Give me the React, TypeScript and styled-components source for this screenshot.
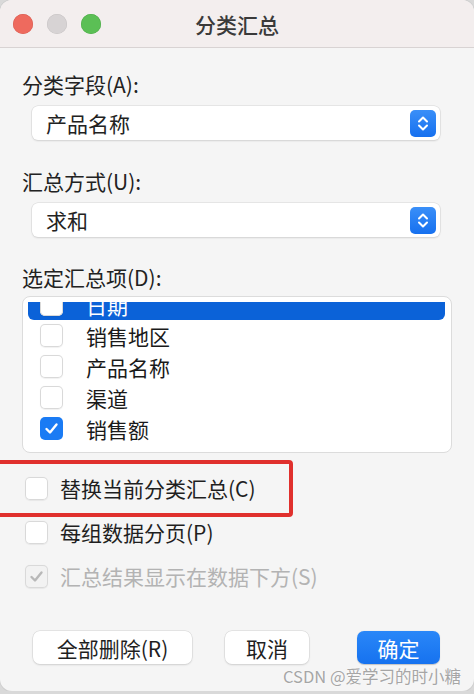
import React from "react";
import styled, { createGlobalStyle } from "styled-components";

const Global = createGlobalStyle`
  html, body { margin: 0; padding: 0; background: #d9d9d9; }
  body { font-family: "Noto Sans CJK SC", "Noto Sans", sans-serif; }
  * { box-sizing: border-box; }
`;

const Window = styled.div`
  width: 474px;
  height: 691px;
  background: #f5f5f5;
  border-radius: 12px;
  overflow: hidden;
  display: flex;
  flex-direction: column;
  box-shadow: 0 0 0 1px #cfcfcf;
`;

const TitleBar = styled.div`
  height: 48px;
  flex: none;
  background: #f3eeee;
  border-bottom: 1px solid #d8d3d3;
  display: grid;
  grid-template-columns: 1fr auto 1fr;
  align-items: center;
  padding: 0 13px;
`;

const Lights = styled.div`
  display: flex;
  gap: 14px;
`;

const Light = styled.span<{ $c: string; $b: string }>`
  width: 20px;
  height: 20px;
  border-radius: 50%;
  background: ${(p) => p.$c};
  box-shadow: inset 0 0 0 0.5px ${(p) => p.$b};
`;

const Title = styled.div`
  font-size: 21px;
  font-weight: 500;
  color: #3a3a3a;
  line-height: 28px;
`;

const Content = styled.div`
  display: flex;
  flex-direction: column;
  padding: 0 22px;
`;

const Label = styled.div<{ $top: number }>`
  font-size: 21px;
  line-height: 28px;
  color: #222;
  margin-top: ${(p) => p.$top}px;
`;

const Select = styled.div<{ $top: number }>`
  margin: ${(p) => p.$top}px 12px 0 10px;
  height: 34px;
  background: #fff;
  border-radius: 6px;
  box-shadow: 0 0 0 0.5px #d6d6d6, 0 1px 2px rgba(0, 0, 0, 0.14);
  display: flex;
  align-items: center;
  justify-content: space-between;
  padding: 0 4px 0 14px;
  font-size: 21px;
  color: #222;
`;

const Stepper = styled.span`
  width: 26px;
  height: 27px;
  border-radius: 5px;
  background: linear-gradient(#3a8ff8, #1670ef);
  display: flex;
  align-items: center;
  justify-content: center;
`;

const ListBox = styled.div`
  margin-top: 5px;
  height: 157px;
  background: #fff;
  border: 1px solid #dcdcdc;
  border-radius: 8px;
  padding: 5px 6px 0 5px;
`;

const Viewport = styled.div`
  height: 145px;
  overflow: hidden;
`;

const Rows = styled.div`
  margin-top: -13px;
  display: flex;
  flex-direction: column;
`;

const Row = styled.div<{ $sel?: boolean }>`
  height: 31px;
  display: flex;
  align-items: center;
  gap: 23px;
  padding-left: 12px;
  font-size: 21px;
  color: ${(p) => (p.$sel ? "#fff" : "#1a1a1a")};
  background: ${(p) => (p.$sel ? "#0b62d8" : "transparent")};
  border-radius: 6px;
`;

const Box = styled.span<{ $checked?: boolean; $disabled?: boolean }>`
  flex: none;
  width: 23px;
  height: 23px;
  border-radius: 5px;
  display: flex;
  align-items: center;
  justify-content: center;
  background: ${(p) =>
    p.$checked ? (p.$disabled ? "#f2f2f2" : "#1a7bf4") : "#fff"};
  box-shadow: ${(p) =>
    p.$checked && !p.$disabled
      ? "none"
      : "inset 0 0 0 1px #d9d9d9, 0 0.5px 1px rgba(0,0,0,0.06)"};
`;

const Options = styled.div`
  margin-top: 15px;
  margin-left: 3px;
  display: flex;
  flex-direction: column;
  gap: 4px;
`;

const Option = styled.div<{ $disabled?: boolean }>`
  position: relative;
  height: 40px;
  display: flex;
  align-items: center;
  gap: 12px;
  font-size: 21px;
  color: ${(p) => (p.$disabled ? "#b3b3b3" : "#1f1f1f")};
`;

const Highlight = styled.span`
  position: absolute;
  left: -29px;
  top: -8px;
  width: 297px;
  height: 57px;
  border: 4px solid #e0302d;
  border-radius: 4px;
  pointer-events: none;
`;

const Buttons = styled.div`
  margin-top: 35px;
  padding: 0 12px 0 11px;
  display: flex;
  gap: 33px;
`;

const Button = styled.button<{ $w: number; $primary?: boolean }>`
  width: ${(p) => p.$w}px;
  height: 33px;
  border: none;
  border-radius: 7px;
  font-family: inherit;
  font-size: 21px;
  padding: 0;
  color: ${(p) => (p.$primary ? "#fff" : "#1f1f1f")};
  background: ${(p) =>
    p.$primary ? "linear-gradient(#2a87f8, #1672ef)" : "#fff"};
  box-shadow: ${(p) =>
    p.$primary
      ? "0 0.5px 1px rgba(0,0,0,0.2)"
      : "0 0 0 0.5px #d4d4d4, 0 1px 2px rgba(0,0,0,0.15)"};
  &:last-child {
    margin-left: auto;
  }
`;

const Watermark = styled.div`
  margin-top: 1px;
  text-align: right;
  padding-right: 13px;
  font-size: 16.5px;
  line-height: 22px;
  color: #a6a6a6;
  text-shadow: 0 0 2px #fff;
`;

const Chevrons = () => (
  <svg width="14" height="19" viewBox="0 0 14 19" fill="none">
    <path d="M3 7.5 L7 3.5 L11 7.5" stroke="#fff" strokeWidth="2" strokeLinecap="round" strokeLinejoin="round" />
    <path d="M3 11.5 L7 15.5 L11 11.5" stroke="#fff" strokeWidth="2" strokeLinecap="round" strokeLinejoin="round" />
  </svg>
);

const Check = ({ color }: { color: string }) => (
  <svg width="17" height="17" viewBox="0 0 17 17" fill="none">
    <path d="M3.5 9 L7 12.5 L13.5 4.5" stroke={color} strokeWidth="2.4" strokeLinecap="round" strokeLinejoin="round" />
  </svg>
);

const items = [
  { name: "日期", sel: true, checked: false },
  { name: "销售地区", checked: false },
  { name: "产品名称", checked: false },
  { name: "渠道", checked: false },
  { name: "销售额", checked: true },
];

export default function App() {
  return (
    <>
      <Global />
      <Window>
        <TitleBar>
          <Lights>
            <Light $c="#ee6a5e" $b="#d65a4f" />
            <Light $c="#d7d3d4" $b="#c6c2c3" />
            <Light $c="#5bbf55" $b="#4aa945" />
          </Lights>
          <Title>分类汇总</Title>
          <span />
        </TitleBar>
        <Content>
          <Label $top={22}>分类字段(A):</Label>
          <Select $top={8}>
            <span>产品名称</span>
            <Stepper>
              <Chevrons />
            </Stepper>
          </Select>
          <Label $top={27}>汇总方式(U):</Label>
          <Select $top={8}>
            <span>求和</span>
            <Stepper>
              <Chevrons />
            </Stepper>
          </Select>
          <Label $top={26}>选定汇总项(D):</Label>
          <ListBox>
            <Viewport>
              <Rows>
                {items.map((it) => (
                  <Row key={it.name} $sel={it.sel}>
                    <Box $checked={it.checked}>
                      {it.checked && <Check color="#fff" />}
                    </Box>
                    <span>{it.name}</span>
                  </Row>
                ))}
              </Rows>
            </Viewport>
          </ListBox>
          <Options>
            <Option>
              <Highlight />
              <Box />
              <span>替换当前分类汇总(C)</span>
            </Option>
            <Option>
              <Box />
              <span>每组数据分页(P)</span>
            </Option>
            <Option $disabled>
              <Box $checked $disabled>
                <Check color="#b8b8b8" />
              </Box>
              <span>汇总结果显示在数据下方(S)</span>
            </Option>
          </Options>
          <Buttons>
            <Button $w={159}>全部删除(R)</Button>
            <Button $w={84}>取消</Button>
            <Button $w={83} $primary>
              确定
            </Button>
          </Buttons>
        </Content>
        <Watermark>CSDN @爱学习的时小糖</Watermark>
      </Window>
    </>
  );
}
